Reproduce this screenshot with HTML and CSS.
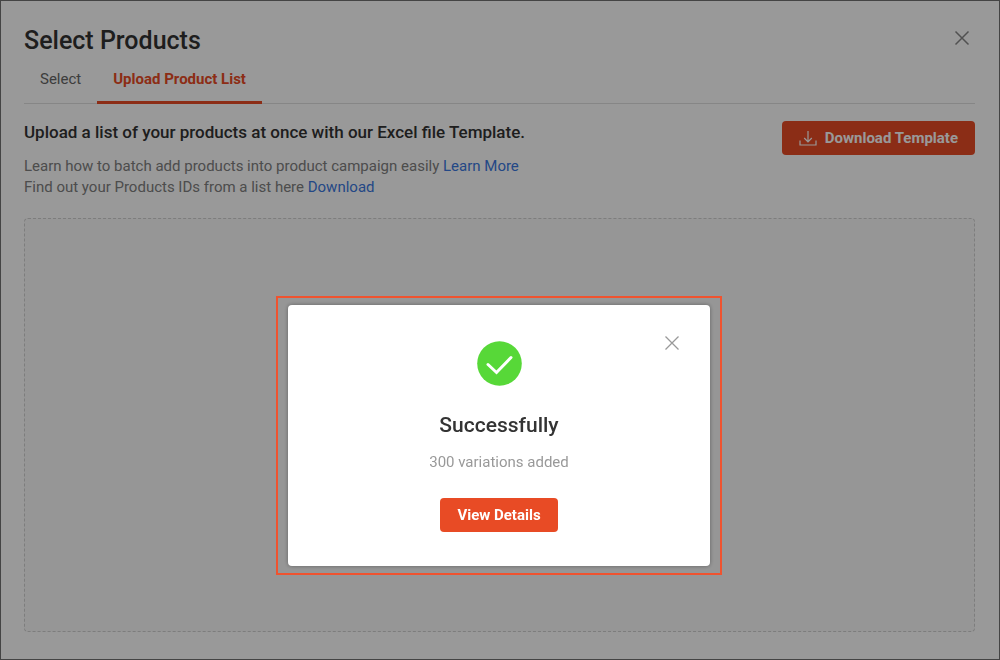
FILE: index.html
```html
<!DOCTYPE html>
<html lang="en">
<head>
    <meta charset="UTF-8">
    <meta name="viewport" content="width=device-width, initial-scale=1.0">
    <title>Select Products</title>
    <link rel="stylesheet" href="styles.css">
</head>
<body>
    <div class="page">
        <header class="page-header">
            <h1>Select Products</h1>
            <button class="close" type="button" aria-label="Close">
                <svg width="16" height="16" viewBox="0 0 16 16"><path d="M1.5 1.5L14.5 14.5M14.5 1.5L1.5 14.5"/></svg>
            </button>
        </header>

        <nav class="tabs">
            <button class="tab" type="button">Select</button>
            <button class="tab active" type="button">Upload Product List</button>
        </nav>

        <section class="intro">
            <div class="intro-text">
                <h2>Upload a list of your products at once with our Excel file Template.</h2>
                <p>Learn how to batch add products into product campaign easily <a href="#">Learn More</a></p>
                <p>Find out your Products IDs from a list here <a href="#">Download</a></p>
            </div>
            <button class="btn btn-download" type="button">
                <svg width="18" height="16" viewBox="0 0 18 16"><path d="M9 1V12M5.2 8L9 12L12.8 8M1 10.5V15H17V10.5"/></svg>
                Download Template
            </button>
        </section>

        <div class="dropzone"></div>
    </div>

    <div class="overlay">
        <div class="highlight">
            <div class="modal" role="dialog" aria-modal="true" aria-labelledby="modalTitle">
                <button class="close modal-close" type="button" aria-label="Close">
                    <svg width="16" height="16" viewBox="0 0 16 16"><path d="M1.5 1.5L14.5 14.5M14.5 1.5L1.5 14.5"/></svg>
                </button>
                <svg class="check" width="45" height="45" viewBox="0 0 45 45">
                    <circle cx="22.5" cy="22.5" r="22.3"/>
                    <path d="M11 23.5L19.5 31.5L34 16.5"/>
                </svg>
                <h3 id="modalTitle">Successfully</h3>
                <p>300 variations added</p>
                <button class="btn" type="button">View Details</button>
            </div>
        </div>
    </div>
</body>
</html>
```

FILE: styles.css
```css
* {
    box-sizing: border-box;
}
body {
    margin: 0;
    font-family: Roboto, "Liberation Sans", sans-serif;
    font-size: 15px;
    color: #333;
}
h1, h2, h3, p {
    margin: 0;
    font-weight: 500;
}
button {
    font-family: inherit;
    border: 0;
    background: none;
    cursor: pointer;
}
.page {
    display: flex;
    flex-direction: column;
    min-height: 100vh;
    padding: 25px 25px 28px 24px;
}
.page-header {
    display: flex;
    justify-content: space-between;
    align-items: flex-start;
    height: 34px;
}
.page-header h1 {
    font-size: 25px;
    line-height: 32px;
}
.close {
    display: flex;
    padding: 5px;
}
.close svg {
    fill: none;
    stroke: #999;
    stroke-width: 1.3;
}
.page-header .close svg {
    stroke: #888;
    stroke-width: 1.5;
}
.tabs {
    display: flex;
    height: 45px;
    border-bottom: 1px solid #e0e0e0;
}
.tab {
    height: 45px;
    padding: 0 16px;
    font-size: 15px;
    line-height: 36px;
    padding-bottom: 2px;
    color: #666;
    border-bottom: 3px solid transparent;
}
.tab.active {
    font-weight: 700;
    color: #ea4b25;
    border-bottom-color: #ea4b25;
}
.intro {
    display: flex;
    justify-content: space-between;
    align-items: flex-start;
    padding-top: 17px;
}
.intro h2 {
    margin-bottom: 13px;
    font-size: 17px;
    line-height: 22px;
}
.intro p {
    font-weight: 400;
    line-height: 21px;
    color: #808080;
}
.intro a {
    color: #3b78e0;
    text-decoration: none;
}
.btn {
    display: flex;
    align-items: center;
    gap: 8px;
    height: 34px;
    padding: 0 17px 1px;
    font-size: 15px;
    font-weight: 700;
    color: #fff;
    background-color: #e84b25;
    border-radius: 4px;
}
.btn svg {
    fill: none;
    stroke: #fff;
    stroke-width: 1.2;
}
.dropzone {
    flex: 1;
    margin-top: 20px;
    background-color: #fafafa;
    border: 1px dashed #d0d0d0;
    border-radius: 4px;
}
/* modal */
.overlay {
    position: fixed;
    inset: 0;
    display: flex;
    justify-content: center;
    align-items: flex-start;
    padding: 295px 2px 0 0;
    background-color: rgba(0, 0, 0, 0.4);
    border: 1px solid #444;
}
.highlight {
    width: 446px;
    padding: 7px 10px;
    border: 2px solid #f0532f;
}
.modal {
    position: relative;
    display: flex;
    flex-direction: column;
    align-items: center;
    padding: 36px 0 34px;
    background-color: #fff;
    border-radius: 4px;
    box-shadow: 0 0 4px rgba(0, 0, 0, 0.35);
}
.modal-close {
    position: absolute;
    top: 25px;
    right: 25px;
}
.check circle {
    fill: #57d838;
}
.check path {
    fill: none;
    stroke: #fff;
    stroke-width: 3;
    stroke-linecap: round;
}
.modal h3 {
    margin-top: 25px;
    font-size: 21px;
    line-height: 28px;
}
.modal p {
    margin: 12px 0 25px;
    font-weight: 400;
    line-height: 22px;
    color: #999;
}
```
